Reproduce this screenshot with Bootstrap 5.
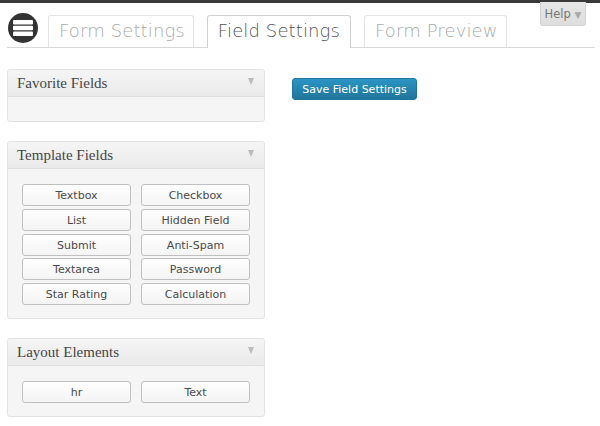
<!DOCTYPE html>
<html lang="en">
<head>
    <meta charset="UTF-8">
    <meta name="viewport" content="width=device-width, initial-scale=1.0">
    <title>Field Settings</title>
    <link href="https://cdn.jsdelivr.net/npm/bootstrap@5.3.0/dist/css/bootstrap.min.css" rel="stylesheet">
    <style>
        body {
            background: #fff;
            font-family: "DejaVu Sans", sans-serif;
            font-size: 11px;
            color: #333;
        }
        .admin-strip {
            height: 3px;
            background: #3a3a3a;
        }
        .page-wrap {
            position: relative;
            padding: 10px 5px 0 7px;
        }
        .help-tab {
            position: absolute;
            top: -1px;
            right: 14px;
            width: 46px;
            height: 24px;
            padding: 2px 0 0 0;
            text-align: center;
            font-size: 11.5px;
            line-height: 20px;
            color: #777;
            background: linear-gradient(to bottom, #e6e6e6, #dedede);
            border: 1px solid #d4d4d4;
            border-top: 0;
            border-radius: 0 0 3px 3px;
        }
        .help-tab span {
            color: #aaa;
            font-size: 9px;
        }
        .tab-bar {
            height: 35px;
            border-bottom: 1px solid #d8d8d8;
        }
        .logo-round {
            width: 30px;
            height: 30px;
            margin-left: 1px;
            flex: none;
        }
        .tab-bar .nav-link {
            height: 32px;
            padding: 0 8px 0 10px;
            font-size: 18px;
            font-weight: 200;
            letter-spacing: .12px;
            line-height: 29px;
            color: #aaa;
            background: #fff;
            border: 1px solid #e4e4e4;
            border-bottom: 0;
            border-radius: 3px 3px 0 0;
        }
        .tab-bar .nav-link.active {
            color: #555;
            height: 33px;
            padding-right: 10px;
            border-color: #d0d0d0;
            background: #fff;
        }
        .tab-list {
            margin-left: 10px;
            gap: 13px;
            border: 0;
            padding-top: 2px;
        }
        .main-cols {
            margin-top: 21px;
            gap: 27px;
        }
        .side-col {
            width: 258px;
            flex: none;
        }
        .field-box {
            background: #f5f5f5;
            border: 1px solid #e2e2e2;
            border-radius: 3px;
            margin-bottom: 19px;
        }
        .field-box .card-header {
            height: 27px;
            padding: 0 9px;
            background: linear-gradient(to bottom, #f5f5f5, #eaeaea);
            border-bottom: 1px solid #dfdfdf;
            border-radius: 3px 3px 0 0;
            font-family: "Liberation Serif", serif;
            font-size: 15px;
            line-height: 26px;
            color: #464646;
        }
        .arrow-down {
            width: 0;
            height: 0;
            margin-top: 8px;
            margin-right: 1px;
            border-left: 3.5px solid transparent;
            border-right: 3.5px solid transparent;
            border-top: 7px solid #bbb;
        }
        .empty-body {
            height: 24px;
        }
        .button-grid {
            display: grid;
            grid-template-columns: 109px 109px;
            column-gap: 10px;
            row-gap: 2.75px;
            padding: 15px 14px 13px 14px;
        }
        .field-btn {
            height: 22px;
            padding: 1px 0 0 0;
            font-size: 11px;
            line-height: 20px;
            color: #4a4a4a;
            background: linear-gradient(to bottom, #fefefe, #f4f4f4);
            border: 1px solid #c0c0c0;
            border-radius: 3px;
        }
        .save-btn {
            margin-top: 9px;
            width: 125px;
            height: 22px;
            padding: 1px 0 0 0;
            font-size: 11px;
            line-height: 20px;
            color: #fff;
            background: linear-gradient(to bottom, #2a95c5, #21759b);
            border: 1px solid #21759b;
            border-radius: 3px;
        }
    </style>
</head>
<body>

<div class="admin-strip"></div>

<div class="page-wrap">
    <div class="help-tab">Help <span>&#9660;</span></div>

    <div class="tab-bar d-flex align-items-start">
        <svg class="logo-round" viewBox="0 0 30 30">
            <circle cx="15" cy="15" r="15" fill="#333"/>
            <rect x="5" y="7" width="20" height="4.4" rx="1" fill="#fff"/>
            <rect x="5" y="12.8" width="20" height="4.4" rx="1" fill="#fff"/>
            <rect x="5" y="18.6" width="20" height="4.4" rx="1" fill="#fff"/>
        </svg>
        <ul class="nav nav-tabs tab-list">
            <li class="nav-item"><a class="nav-link" href="#">Form Settings</a></li>
            <li class="nav-item"><a class="nav-link active" href="#">Field Settings</a></li>
            <li class="nav-item"><a class="nav-link" href="#">Form Preview</a></li>
        </ul>
    </div>

    <div class="main-cols d-flex align-items-start">
        <div class="side-col">
            <div class="card field-box">
                <div class="card-header d-flex justify-content-between">Favorite Fields <span class="arrow-down"></span></div>
                <div class="empty-body"></div>
            </div>
            <div class="card field-box">
                <div class="card-header d-flex justify-content-between">Template Fields <span class="arrow-down"></span></div>
                <div class="button-grid">
                    <button class="btn field-btn">Textbox</button>
                    <button class="btn field-btn">Checkbox</button>
                    <button class="btn field-btn">List</button>
                    <button class="btn field-btn">Hidden Field</button>
                    <button class="btn field-btn">Submit</button>
                    <button class="btn field-btn">Anti-Spam</button>
                    <button class="btn field-btn">Textarea</button>
                    <button class="btn field-btn">Password</button>
                    <button class="btn field-btn">Star Rating</button>
                    <button class="btn field-btn">Calculation</button>
                </div>
            </div>
            <div class="card field-box">
                <div class="card-header d-flex justify-content-between">Layout Elements <span class="arrow-down"></span></div>
                <div class="button-grid">
                    <button class="btn field-btn">hr</button>
                    <button class="btn field-btn">Text</button>
                </div>
            </div>
        </div>
        <div>
            <button class="btn save-btn">Save Field Settings</button>
        </div>
    </div>
</div>

<script src="https://cdn.jsdelivr.net/npm/bootstrap@5.3.0/dist/js/bootstrap.bundle.min.js"></script>
</body>
</html>
